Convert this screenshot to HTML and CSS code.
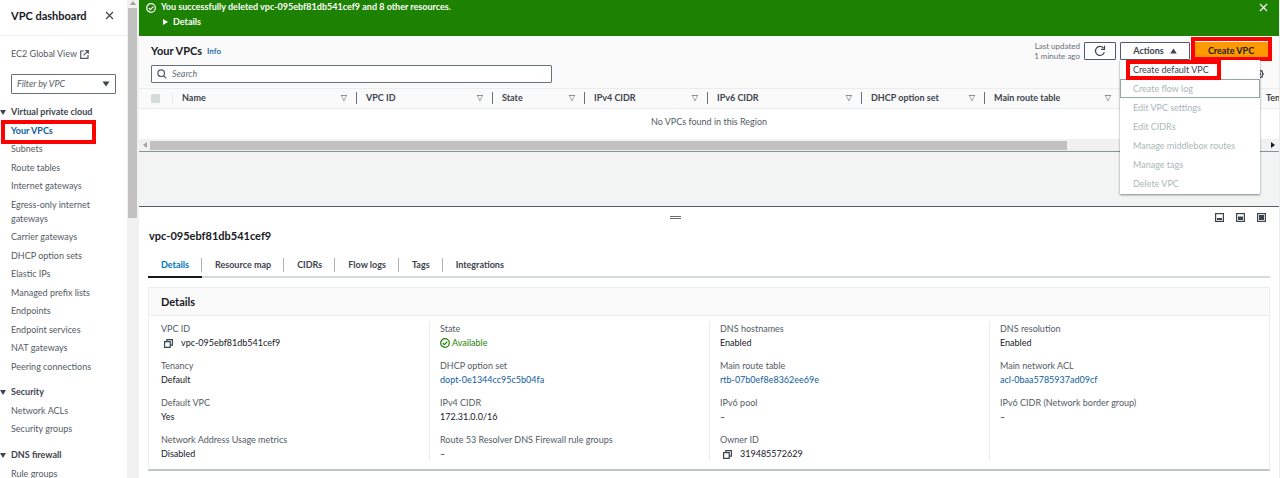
FILE: index.html
```html
<!DOCTYPE html>
<html lang="en">
<head>
    <meta charset="UTF-8">
    <meta name="viewport" content="width=device-width, initial-scale=1.0">
    <title>Your VPCs | VPC dashboard</title>
    <link rel="stylesheet" href="styles.css">
</head>
<body>
    <!-- Sidebar -->
    <aside class="sidebar">
        <div class="sidebar-content">
            <div class="sidebar-header">
                <h2>VPC dashboard</h2>
                <button class="icon-button" aria-label="Close navigation">
                    <svg width="9" height="9" viewBox="0 0 9 9"><path d="M1 1l7 7M8 1l-7 7"/></svg>
                </button>
            </div>
            <div class="sidebar-tools">
                <a class="global-view" href="#">EC2 Global View
                    <svg width="9" height="9" viewBox="0 0 9 9"><path d="M4 1H.7v7.3H8V5M5.2.7h3.1v3.1M8.3.7L3.6 5.4"/></svg>
                </a>
                <div class="select-wrap">
                    <select aria-label="Filter by VPC">
                        <option>Filter by VPC</option>
                    </select>
                    <svg class="select-arrow" width="8" height="6" viewBox="0 0 8 6"><path d="M.5.5h7L4 5.500z"/></svg>
                </div>
            </div>
            <nav>
                <h3>Virtual private cloud</h3>
                <ul>
                    <li><a class="active marked" href="#">Your VPCs</a></li>
                    <li><a href="#">Subnets</a></li>
                    <li><a href="#">Route tables</a></li>
                    <li><a href="#">Internet gateways</a></li>
                    <li><a href="#">Egress-only internet gateways</a></li>
                    <li><a href="#">Carrier gateways</a></li>
                    <li><a href="#">DHCP option sets</a></li>
                    <li><a href="#">Elastic IPs</a></li>
                    <li><a href="#">Managed prefix lists</a></li>
                    <li><a href="#">Endpoints</a></li>
                    <li><a href="#">Endpoint services</a></li>
                    <li><a href="#">NAT gateways</a></li>
                    <li><a href="#">Peering connections</a></li>
                </ul>
                <h3>Security</h3>
                <ul>
                    <li><a href="#">Network ACLs</a></li>
                    <li><a href="#">Security groups</a></li>
                </ul>
                <h3>DNS firewall</h3>
                <ul>
                    <li><a href="#">Rule groups</a></li>
                </ul>
            </nav>
        </div>
        <div class="scroll-y">
            <svg width="6" height="4" viewBox="0 0 6 4"><path d="M3 0l3 4H0z"/></svg>
            <div class="scroll-thumb"></div>
        </div>
    </aside>

    <main>
        <!-- Success message -->
        <div class="banner">
            <svg width="10" height="10" viewBox="0 0 10 10"><circle cx="5" cy="5" r="4.300"/><path d="M2.800 5.100l1.600 1.600 2.900-3"/></svg>
            <div class="banner-text">
                <p>You successfully deleted vpc-095ebf81db541cef9 and 8 other resources.</p>
                <button class="banner-toggle">Details</button>
            </div>
            <button class="icon-button" aria-label="Dismiss">
                <svg width="9" height="9" viewBox="0 0 9 9"><path d="M1 1l7 7M8 1l-7 7"/></svg>
            </button>
        </div>

        <!-- VPC list -->
        <section class="list">
            <div class="list-header">
                <div class="title-row">
                    <h1>Your VPCs</h1>
                    <a class="info" href="#">Info</a>
                    <p class="updated">Last updated<br>1 minute ago</p>
                    <button class="button refresh" aria-label="Refresh">
                        <svg width="12" height="12" viewBox="0 0 12 12"><path d="M10.300 7.200A4.500 4.500 0 1 1 9.400 3M10.500.800v3.500H7"/></svg>
                    </button>
                    <div class="actions">
                        <button class="button">Actions
                            <svg width="7" height="6" viewBox="0 0 7 6"><path class="solid" d="M3.500.500L6.800 5.500H.2z"/></svg>
                        </button>
                        <div class="menu">
                            <button class="menu-item marked">Create default VPC</button>
                            <button class="menu-item focused" disabled>Create flow log</button>
                            <button class="menu-item" disabled>Edit VPC settings</button>
                            <button class="menu-item" disabled>Edit CIDRs</button>
                            <button class="menu-item" disabled>Manage middlebox routes</button>
                            <button class="menu-item" disabled>Manage tags</button>
                            <button class="menu-item" disabled>Delete VPC</button>
                        </div>
                    </div>
                    <button class="button primary marked">Create VPC</button>
                </div>
                <div class="search-row">
                    <div class="search">
                        <svg width="10" height="10" viewBox="0 0 10 10"><circle cx="4.200" cy="4.200" r="3.300"/><path d="M6.600 6.600L9.300 9.300"/></svg>
                        <input type="text" placeholder="Search" aria-label="Search">
                    </div>
                    <button class="icon-button" aria-label="Preferences">
                        <svg width="10" height="10" viewBox="0 0 10 10"><circle cx="5" cy="5" r="3.700"/><circle cx="5" cy="5" r="1.400"/><path d="M5 0v1.500M5 8.500V10M0 5h1.500M8.500 5H10M1.500 1.500l1 1M7.500 7.500l1 1M8.500 1.500l-1 1M2.500 7.500l-1 1"/></svg>
                    </button>
                </div>
            </div>
            <div class="table-wrap">
                <table>
                    <colgroup>
                        <col class="col-check"><col class="col-name"><col class="col-id"><col class="col-state"><col class="col-ipv4"><col class="col-ipv6"><col class="col-dhcp"><col class="col-route"><col class="col-acl"><col class="col-tenancy">
                    </colgroup>
                    <thead>
                        <tr>
                            <th><input type="checkbox" aria-label="Select all" disabled></th>
                            <th><span>Name</span></th>
                            <th><span>VPC ID</span></th>
                            <th><span>State</span></th>
                            <th><span>IPv4 CIDR</span></th>
                            <th><span>IPv6 CIDR</span></th>
                            <th><span>DHCP option set</span></th>
                            <th><span>Main route table</span></th>
                            <th></th>
                            <th><span>Tenancy</span></th>
                        </tr>
                    </thead>
                </table>
                <p class="empty">No VPCs found in this Region</p>
            </div>
            <div class="scroll-x">
                <svg width="4" height="6" viewBox="0 0 4 6"><path d="M4 0v6L0 3z"/></svg>
                <div class="scroll-track"><div class="scroll-thumb"></div></div>
                <svg class="dark" width="4" height="6" viewBox="0 0 4 6"><path d="M0 0v6l4-3z"/></svg>
            </div>
        </section>

        <!-- Split panel -->
        <section class="panel">
            <div class="panel-bar">
                <div class="handle"></div>
                <div class="panel-sizes">
                    <button class="icon-button" aria-label="Small panel"><svg width="9" height="9" viewBox="0 0 9 9"><rect x=".6" y=".6" width="7.800" height="7.800"/><path class="solid" d="M2 5h5v2H2z"/></svg></button>
                    <button class="icon-button" aria-label="Medium panel"><svg width="9" height="9" viewBox="0 0 9 9"><rect x=".6" y=".6" width="7.800" height="7.800"/><path class="solid" d="M2 3.500h5V7H2z"/></svg></button>
                    <button class="icon-button" aria-label="Full panel"><svg width="9" height="9" viewBox="0 0 9 9"><rect x=".6" y=".6" width="7.800" height="7.800"/><path class="solid" d="M2 2h5v5H2z"/></svg></button>
                </div>
            </div>
            <h2>vpc-095ebf81db541cef9</h2>
            <div class="tabs" role="tablist">
                <button class="tab selected" role="tab" aria-selected="true">Details</button>
                <button class="tab" role="tab">Resource map</button>
                <button class="tab" role="tab">CIDRs</button>
                <button class="tab" role="tab">Flow logs</button>
                <button class="tab" role="tab">Tags</button>
                <button class="tab" role="tab">Integrations</button>
            </div>
            <div class="card">
                <h3>Details</h3>
                <div class="card-body">
                    <dl>
                        <dt>VPC ID</dt>
                        <dd><button class="copy" aria-label="Copy VPC ID"><svg width="9" height="9" viewBox="0 0 9 9"><path d="M.6 2.600h5.600v5.800H.6zM2.800 2.600V.6h5.600v5.600H6.200"/></svg></button>vpc-095ebf81db541cef9</dd>
                        <dt>Tenancy</dt>
                        <dd>Default</dd>
                        <dt>Default VPC</dt>
                        <dd>Yes</dd>
                        <dt>Network Address Usage metrics</dt>
                        <dd>Disabled</dd>
                    </dl>
                    <dl>
                        <dt>State</dt>
                        <dd class="available"><svg width="10" height="10" viewBox="0 0 10 10"><circle cx="5" cy="5" r="4.300"/><path d="M2.800 5.100l1.600 1.600 2.900-3"/></svg>Available</dd>
                        <dt>DHCP option set</dt>
                        <dd><a href="#">dopt-0e1344cc95c5b04fa</a></dd>
                        <dt>IPv4 CIDR</dt>
                        <dd>172.31.0.0/16</dd>
                        <dt>Route 53 Resolver DNS Firewall rule groups</dt>
                        <dd>–</dd>
                    </dl>
                    <dl>
                        <dt>DNS hostnames</dt>
                        <dd>Enabled</dd>
                        <dt>Main route table</dt>
                        <dd><a href="#">rtb-07b0ef8e8362ee69e</a></dd>
                        <dt>IPv6 pool</dt>
                        <dd>–</dd>
                        <dt>Owner ID</dt>
                        <dd><button class="copy" aria-label="Copy owner ID"><svg width="9" height="9" viewBox="0 0 9 9"><path d="M.6 2.600h5.600v5.800H.6zM2.800 2.600V.6h5.600v5.600H6.200"/></svg></button>319485572629</dd>
                    </dl>
                    <dl>
                        <dt>DNS resolution</dt>
                        <dd>Enabled</dd>
                        <dt>Main network ACL</dt>
                        <dd><a href="#">acl-0baa5785937ad09cf</a></dd>
                        <dt>IPv6 CIDR (Network border group)</dt>
                        <dd>–</dd>
                    </dl>
                </div>
            </div>
        </section>
    </main>
</body>
</html>
```
FILE: styles.css
```css
*, *::before, *::after {
    box-sizing: border-box;
}

body {
    margin: 0;
    height: 100vh;
    display: flex;
    overflow: hidden;
    font-family: Lato, "Noto Sans", sans-serif;
    font-size: 9px;
    line-height: 14px;
    color: #16191f;
    background-color: #fff;
}

h1, h2, h3, p, ul, dl, dd {
    margin: 0;
    padding: 0;
}

h1, h2, h3 {
    font-size: 11px;
    font-weight: 700;
}

a {
    color: #0f5c9e;
    text-decoration: none;
}

button, input, select {
    font: inherit;
    color: inherit;
    margin: 0;
}

button {
    padding: 0;
    border: none;
    background: none;
    cursor: pointer;
}

svg {
    display: block;
    flex: none;
    fill: none;
    stroke: currentColor;
    stroke-width: 1.2;
}

.solid {
    fill: currentColor;
    stroke: none;
}

.icon-button {
    color: #3c444d;
}

/* Red highlight boxes */
.marked {
    position: relative;
}

.marked::after {
    content: "";
    position: absolute;
    border: 4px solid #fe0000;
    pointer-events: none;
}

/* Sidebar */
.sidebar {
    display: flex;
    flex: none;
    width: 139px;
}

.sidebar-content {
    flex: 1;
    overflow: hidden;
    color: #545b64;
}

.sidebar-header {
    display: flex;
    align-items: center;
    justify-content: space-between;
    height: 36px;
    padding: 0 13px 4px 11px;
    border-bottom: 1px solid #eaeded;
    color: #16191f;
}

.sidebar-tools {
    padding: 11px 11px;
}

.global-view {
    display: flex;
    align-items: center;
    gap: 3px;
    margin-bottom: 13px;
    color: #545b64;
}

.select-wrap {
    position: relative;
}

.select-wrap select {
    display: block;
    appearance: none;
    width: 100%;
    height: 20px;
    padding: 0 5px;
    border: 1px solid #687078;
    border-radius: 1px;
    background-color: #fff;
    font-style: italic;
    color: #545b64;
}

.select-arrow {
    position: absolute;
    right: 6px;
    top: 7px;
    fill: #3c444d;
    stroke: none;
}

nav h3 {
    display: flex;
    align-items: center;
    gap: 5px;
    margin-bottom: 5px;
    font-size: 9px;
    color: #3c444d;
}

nav h3::before {
    content: "";
    border: 3px solid transparent;
    border-top: 5px solid #3c444d;
    border-bottom: none;
}

nav ul {
    list-style: none;
    padding: 0 20px 7px 11px;
}

nav li {
    padding-bottom: 4px;
}

nav li:nth-child(even) {
    padding-bottom: 5px;
}

nav a {
    display: block;
    color: #545b64;
}

nav a.active {
    font-weight: 700;
    color: #0f5c9e;
}

nav a.marked::after {
    top: -4px;
    bottom: -6px;
    left: -10px;
    right: 11px;
}

/* Scrollbars */
.scroll-y {
    width: 12px;
    background-color: #f1f1f1;
}

.scroll-y svg, .scroll-x svg {
    fill: #a3a3a3;
    stroke: none;
}

.scroll-y svg {
    margin: 1px auto 3px;
}

.scroll-y .scroll-thumb {
    height: 44vh;
    margin: 0 2px 0 1px;
    background-color: #c1c1c1;
}

.scroll-x {
    display: flex;
    align-items: center;
    gap: 3px;
    height: 12px;
    padding: 0 4px;
    background-color: #f1f1f1;
}

.scroll-x svg.dark {
    fill: #16191f;
}

.scroll-track {
    flex: 1;
}

.scroll-x .scroll-thumb {
    width: 82%;
    height: 9px;
    background-color: #c1c1c1;
}

/* Main area */
main {
    flex: 1;
    min-width: 0;
    display: flex;
    flex-direction: column;
    border-right: 1px solid #eaeded;
    background-color: #f2f3f3;
}

.banner {
    display: flex;
    align-items: flex-start;
    gap: 5px;
    height: 36px;
    padding: 0 11px 0 7px;
    background-color: #1d8102;
    color: #fff;
    font-weight: 700;
}

.banner > svg, .banner > button {
    margin-top: 3px;
}

.banner .icon-button {
    color: #fff;
}

.banner-text {
    flex: 1;
}

.banner-toggle {
    display: flex;
    align-items: center;
    gap: 5px;
    margin-top: 1px;
    padding-left: 2px;
}

.banner-toggle::before {
    content: "";
    border: 3px solid transparent;
    border-left: 5px solid #fff;
    border-right: none;
}

/* VPC list */
.list {
    flex: none;
    height: 116px;
    border-bottom: 1px solid #879596;
    background-color: #fff;
}

.list-header {
    height: 53px;
    padding: 6px 11px 0 12px;
    border-bottom: 1px solid #eaeded;
    background-color: #fafafa;
}

.title-row {
    display: flex;
    align-items: center;
    height: 18px;
}

.info {
    margin-left: 5px;
    font-size: 8px;
    font-weight: 600;
}

.updated {
    margin-left: auto;
    margin-right: 4px;
    font-size: 8px;
    line-height: 10px;
    text-align: right;
    color: #687078;
}

.button {
    display: flex;
    flex: none;
    align-items: center;
    justify-content: center;
    gap: 6px;
    height: 18px;
    border: 1px solid #545b64;
    border-radius: 1px;
    background-color: #fff;
    color: #3c444d;
    font-weight: 700;
    white-space: nowrap;
}

.refresh {
    width: 32px;
}

.actions {
    position: relative;
    margin: 0 4px;
}

.actions .button {
    width: 70px;
}

.button.primary {
    width: 74px;
    border-color: #ff9900;
    background-color: #ff9900;
    color: #16191f;
}

.button.primary::after {
    inset: -6px -5px -2px -4px;
}

/* Actions menu */
.menu {
    position: absolute;
    z-index: 1;
    top: 18px;
    left: 0;
    width: 140px;
    padding-bottom: 1px;
    background-color: #fff;
    box-shadow: 0 1px 2px rgba(0, 28, 36, 0.5);
}

.menu-item {
    display: block;
    width: 100%;
    height: 19px;
    padding: 0 13px;
    text-align: left;
    white-space: nowrap;
    color: #3c444d;
}

.menu-item:disabled {
    color: #aab7b8;
}

.menu-item.focused {
    padding: 0 12px;
    border: 1px solid #95a5a6;
}

.menu-item.marked::after {
    inset: 0 39px -1px 6px;
    z-index: 1;
}

.search-row {
    display: flex;
    align-items: center;
    justify-content: space-between;
    margin-top: 5px;
    padding-right: 4px;
}

.search {
    display: flex;
    align-items: center;
    gap: 5px;
    width: 36%;
    height: 18px;
    padding: 0 5px;
    border: 1px solid #687078;
    border-radius: 1px;
    background-color: #fff;
    color: #545b64;
}

.search input {
    flex: 1;
    min-width: 0;
    padding: 0;
    border: none;
    outline: none;
    background: none;
}

.search input::placeholder {
    font-style: italic;
    color: #687078;
}

.table-wrap {
    height: 50px;
    overflow: hidden;
}

table {
    width: 1260px;
    table-layout: fixed;
    border-collapse: collapse;
    background-color: #fafafa;
}

.col-check { width: 33px; }
.col-name { width: 184px; }
.col-id { width: 136px; }
.col-state { width: 92px; }
.col-ipv4, .col-dhcp { width: 123px; }
.col-ipv6 { width: 154px; }
.col-route, .col-acl { width: 136px; }

thead tr {
    height: 19px;
    border-bottom: 1px solid #eaeded;
}

th {
    padding: 0;
    font-weight: 700;
    text-align: left;
    color: #3c444d;
}

th span {
    display: flex;
    align-items: center;
    justify-content: space-between;
    height: 12px;
    padding: 0 9px;
    border-left: 1px solid #687078;
}

th:nth-child(2) span {
    border-color: #eaeded;
}

th span::after {
    content: "▽";
    font-family: "DejaVu Sans", sans-serif;
    font-size: 8px;
}

th input {
    display: block;
    appearance: none;
    width: 9px;
    height: 9px;
    margin-left: 12px;
    border-radius: 1px;
    background-color: #d5dbdb;
}

.empty {
    padding-top: 6px;
    text-align: center;
    color: #545b64;
}

/* Split panel */
.panel {
    flex: 1;
    margin-top: 54px;
    padding: 0 9px;
    border-top: 1px solid #545b64;
    background-color: #fff;
}

.panel-bar {
    display: flex;
    align-items: center;
    height: 20px;
    margin-bottom: 1px;
    padding-right: 4px;
}

.handle {
    width: 11px;
    height: 3px;
    margin: 0 auto;
    border: solid #687078;
    border-width: 1px 0;
}

.panel-sizes {
    display: flex;
    gap: 12px;
    padding-left: 12px;
}

.panel h2 {
    padding-left: 1px;
    line-height: 15px;
}

.tabs {
    display: flex;
    margin-top: 9px;
    border-bottom: 2px solid #d5dbdb;
}

.tab {
    display: flex;
    height: 26px;
    margin-bottom: -2px;
    padding: 6px 0;
    font-weight: 700;
    color: #3c444d;
    line-height: 14px;
}

.tab::before, .tab::after {
    content: "";
    width: 13px;
}

.tab::after {
    height: 14px;
    border-right: 1px solid #aab7b8;
}

.tab:last-child::after {
    border: none;
}

.tab.selected {
    border-bottom: 2px solid #16191f;
    color: #0073bb;
}

.card {
    margin-top: 9px;
    border: 1px solid #eaeded;
    border-bottom: 2px solid #bcc4c4;
}

.card h3 {
    height: 28px;
    padding: 0 12px;
    border-bottom: 1px solid #eaeded;
    background-color: #fafafa;
    line-height: 27px;
}

.card-body {
    display: grid;
    grid-template-columns: repeat(4, 1fr);
    padding: 6px 0 9px;
}

dl {
    height: 138px;
    padding-left: 10px;
    border-left: 1px solid #eaeded;
}

dl:first-child {
    padding-left: 12px;
    border-left: none;
}

dt {
    color: #545b64;
}

dd {
    display: flex;
    align-items: center;
    margin-bottom: 9px;
}

.copy {
    margin: 0 8px 0 3px;
    color: #3c444d;
}

.available {
    gap: 2px;
    color: #1d8102;
}
```
